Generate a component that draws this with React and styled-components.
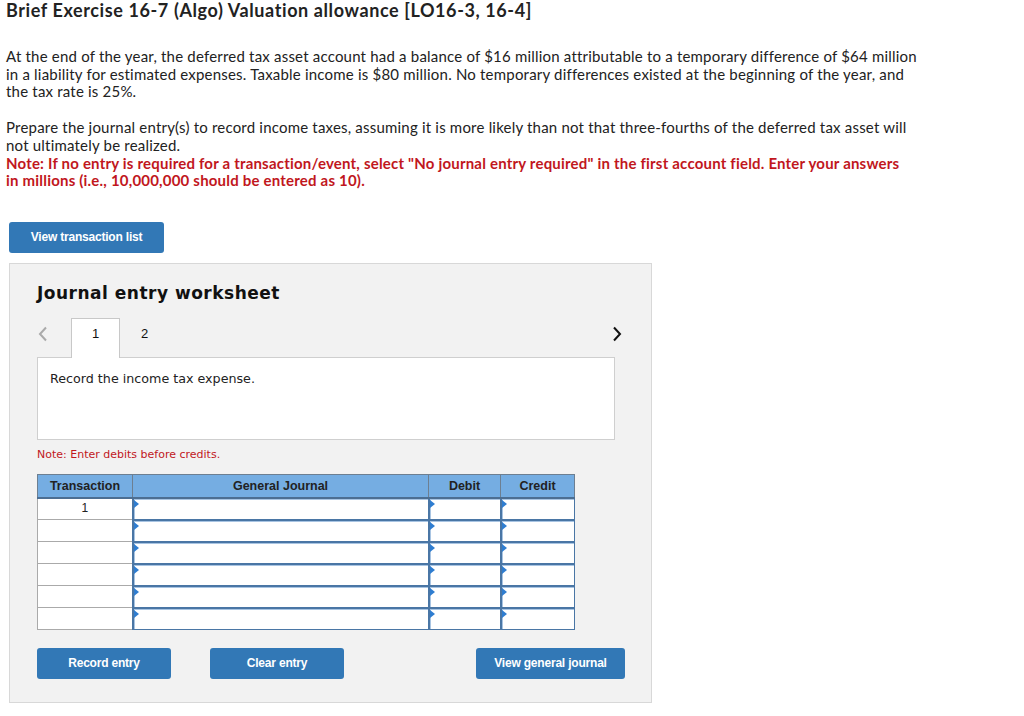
import styled, { createGlobalStyle } from 'styled-components';

const GlobalStyle = createGlobalStyle`
  body {
    margin: 0;
    background: #fff;
    color: #222;
    font-family: 'Lato', 'Liberation Sans', sans-serif;
  }
`;

const Page = styled.div`
  width: 1024px;
  height: 716px;
  padding: 0 6px;
  box-sizing: border-box;
  overflow: hidden;
`;

const Title = styled.h1`
  margin: 0;
  font-size: 18px;
  line-height: 20px;
  font-weight: 700;
  letter-spacing: 0.6px;
  color: #222;
`;

const Para = styled.p`
  margin: ${(p) => p.$top || 0}px 0 0;
  width: 916px;
  font-size: 15px;
  line-height: 17.7px;
  letter-spacing: 0.2px;
  color: #222;
`;

const Note = styled.span`
  display: block;
  width: 902px;
  color: #c1171d;
  font-weight: 700;
`;

const BlueButton = styled.button`
  height: 31px;
  width: ${(p) => p.$w}px;
  border: none;
  border-radius: 3px;
  background: #3278b6;
  color: #fff;
  font-family: 'Liberation Sans', Arial, sans-serif;
  font-weight: 700;
  font-size: 12px;
  letter-spacing: -0.2px;
  cursor: pointer;
`;

const TopButton = styled(BlueButton)`
  margin: 32px 0 0 3px;
  display: block;
`;

const Panel = styled.div`
  margin: 10px 0 0 3px;
  width: 643px;
  height: 440px;
  box-sizing: border-box;
  background: #f2f2f2;
  border: 1px solid #d8d8d8;
  padding: 0 0 0 27px;
  font-family: 'DejaVu Sans', Verdana, sans-serif;
`;

const Heading = styled.h2`
  margin: 20px 0 0;
  font-size: 17px;
  line-height: 18px;
  font-weight: 700;
  color: #111;
  letter-spacing: 0.5px;
`;

const TabBar = styled.div`
  margin-top: 16px;
  width: 588px;
  height: 39px;
  display: flex;
  align-items: stretch;
`;

const Arrow = styled.span`
  width: ${(p) => p.$w}px;
  display: flex;
  align-items: center;
  justify-content: flex-start;
  padding-bottom: 6px;
`;

const Tab = styled.div`
  width: 49px;
  display: flex;
  align-items: center;
  justify-content: center;
  padding-bottom: 10px;
  font-family: 'Liberation Sans', Arial, sans-serif;
  font-size: 13px;
  color: #111;
  background: ${(p) => (p.$active ? '#fff' : 'transparent')};
  border: 1px solid ${(p) => (p.$active ? '#c8c8c8' : 'transparent')};
  border-bottom: none;
  position: relative;
  z-index: 1;
  margin-bottom: -1px;
  box-sizing: border-box;
`;

const Spacer = styled.div`
  flex: 1;
`;

const Instruction = styled.div`
  width: 578px;
  height: 83px;
  box-sizing: border-box;
  background: #fff;
  border: 1px solid #cfcfcf;
  padding: 13px 12px;
  font-size: 12.7px;
  color: #222;
`;

const SmallNote = styled.div`
  margin-top: 8px;
  font-size: 11px;
  color: #c1171d;
`;

const Table = styled.table`
  margin-top: 13px;
  border-collapse: collapse;
  font-family: 'Liberation Sans', Arial, sans-serif;
  font-size: 12.5px;
`;

const Th = styled.th`
  width: ${(p) => p.$w}px;
  height: 22px;
  padding: 0;
  background: #75ade2;
  border: 1px solid #6d7f91;
  border-bottom: 2px solid #4c6e92;
  font-weight: 700;
  color: #222;
  text-align: center;
`;

const TransCell = styled.td`
  height: 20px;
  padding: 0;
  background: #fff;
  border: 1px solid #aaa;
  border-top-color: ${(p) => (p.$dark ? '#666' : '#aaa')};
  text-align: center;
  vertical-align: top;
  font-size: 12px;
  line-height: 19px;
  color: #222;
`;

const InputCell = styled.td`
  padding: 0;
  height: 20px;
  border: 1px solid #4a76a5;
  border-top-width: 2px;
  border-left-width: 2px;
  background: #fff;
  position: relative;
  box-shadow: inset 1px 1px 0 #a8c4e2;
`;

const Flag = styled.span`
  position: absolute;
  left: 0;
  top: 1px;
  width: 0;
  height: 0;
  border-top: 4px solid transparent;
  border-bottom: 4px solid transparent;
  border-left: 5px solid #2f7dd0;
`;

const Actions = styled.div`
  margin-top: 18px;
  width: 588px;
  display: flex;
  align-items: center;
`;

const Gap = styled.div`
  width: ${(p) => p.$w}px;
`;

const rows = [1, 2, 3, 4, 5, 6];

export default function App() {
  return (
    <Page>
      <GlobalStyle />
      <Title>Brief Exercise 16-7 (Algo) Valuation allowance [LO16-3, 16-4]</Title>
      <Para $top={28}>
        At the end of the year, the deferred tax asset account had a balance of $16 million attributable to a
        temporary difference of $64 million in a liability for estimated expenses. Taxable income is $80 million.
        No temporary differences existed at the beginning of the year, and the tax rate is 25%.
      </Para>
      <Para $top={18}>
        Prepare the journal entry(s) to record income taxes, assuming it is more likely than not that three-fourths
        of the deferred tax asset will not ultimately be realized.
        <Note>
          Note: If no entry is required for a transaction/event, select "No journal entry required" in the first
          account field. Enter your answers in millions (i.e., 10,000,000 should be entered as 10).
        </Note>
      </Para>
      <TopButton $w={155}>View transaction list</TopButton>
      <Panel>
        <Heading>Journal entry worksheet</Heading>
        <TabBar>
          <Arrow $w={34}>
            <svg width="12" height="16" viewBox="0 0 12 16">
              <path d="M9 1.5 L3 8 L9 14.5" fill="none" stroke="#aaa" strokeWidth="2" />
            </svg>
          </Arrow>
          <Tab $active>1</Tab>
          <Tab>2</Tab>
          <Spacer />
          <Arrow $w={14}>
            <svg width="12" height="16" viewBox="0 0 12 16">
              <path d="M3 1.5 L9 8 L3 14.5" fill="none" stroke="#111" strokeWidth="2" />
            </svg>
          </Arrow>
        </TabBar>
        <Instruction>Record the income tax expense.</Instruction>
        <SmallNote>Note: Enter debits before credits.</SmallNote>
        <Table>
          <thead>
            <tr>
              <Th $w={94}>Transaction</Th>
              <Th $w={295}>General Journal</Th>
              <Th $w={71}>Debit</Th>
              <Th $w={73}>Credit</Th>
            </tr>
          </thead>
          <tbody>
            {rows.map((r) => (
              <tr key={r}>
                <TransCell $dark={r === 4 || r === 5}>{r === 1 ? '1' : ''}</TransCell>
                <InputCell><Flag /></InputCell>
                <InputCell><Flag /></InputCell>
                <InputCell><Flag /></InputCell>
              </tr>
            ))}
          </tbody>
        </Table>
        <Actions>
          <BlueButton $w={134}>Record entry</BlueButton>
          <Gap $w={39} />
          <BlueButton $w={134}>Clear entry</BlueButton>
          <Spacer />
          <BlueButton $w={149}>View general journal</BlueButton>
        </Actions>
      </Panel>
    </Page>
  );
}
